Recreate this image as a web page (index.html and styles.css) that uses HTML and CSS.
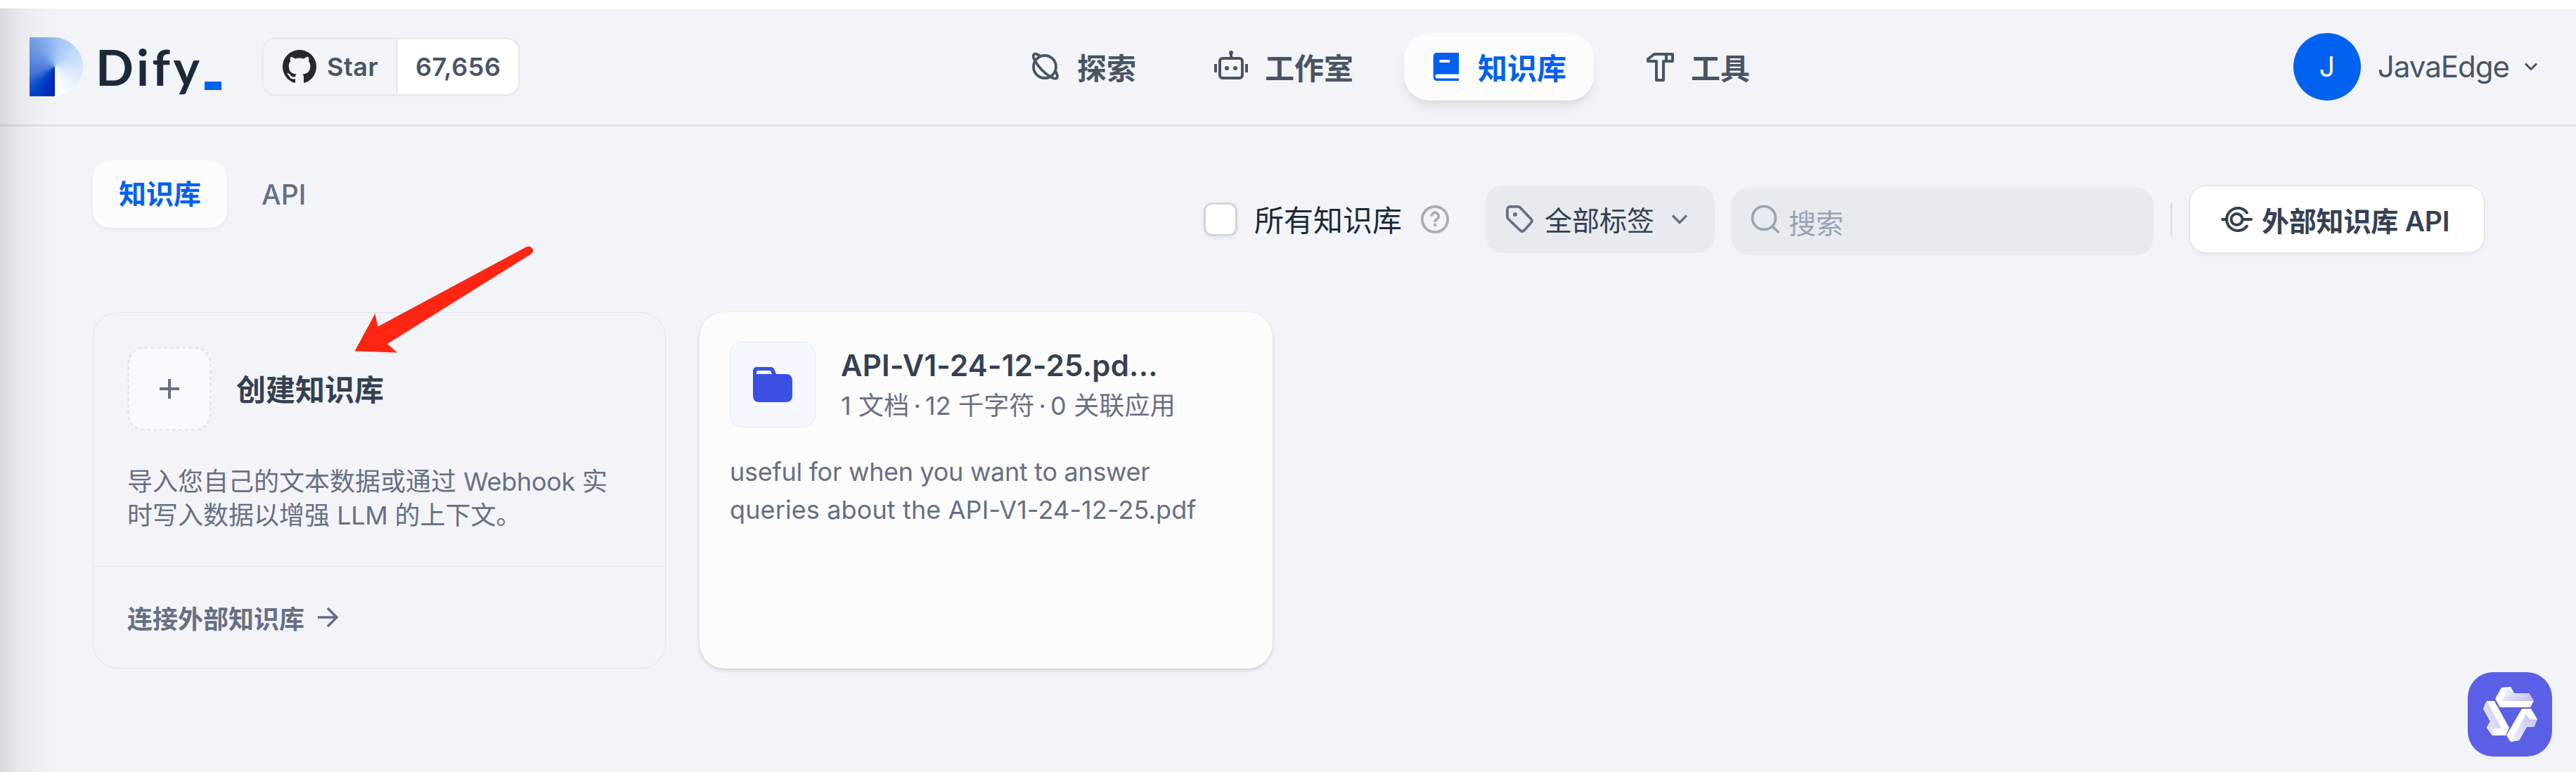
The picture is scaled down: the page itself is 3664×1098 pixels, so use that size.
FILE: index.html
```
<!DOCTYPE html>
<html lang="zh">
<head>
    <meta charset="utf-8">
    <title>知识库 - Dify</title>
    <link rel="stylesheet" href="styles.css">
</head>
<body>
    <header class="header">
        <div class="header-left">
            <div class="logo">
                <div class="logo-mark"></div>
                <span class="logo-text">Dify</span>
                <span class="logo-dash"></span>
            </div>
            <div class="github">
                <div class="github-star">
                    <svg width="48" height="48" viewBox="0 0 16 16" fill="#24292f"><path d="M8 0C3.58 0 0 3.58 0 8c0 3.54 2.29 6.53 5.47 7.59.4.07.55-.17.55-.38 0-.19-.01-.82-.01-1.49-2.01.37-2.53-.49-2.69-.94-.09-.23-.48-.94-.82-1.13-.28-.15-.68-.52-.01-.53.63-.01 1.08.58 1.23.82.72 1.21 1.87.87 2.33.66.07-.52.28-.87.51-1.07-1.78-.2-3.64-.89-3.64-3.95 0-.87.31-1.59.82-2.15-.08-.2-.36-1.02.08-2.12 0 0 .67-.21 2.2.82.64-.18 1.32-.27 2-.27s1.36.09 2 .27c1.53-1.04 2.2-.82 2.2-.82.44 1.1.16 1.92.08 2.12.51.56.82 1.27.82 2.15 0 3.07-1.87 3.75-3.65 3.95.29.25.54.73.54 1.48 0 1.07-.01 1.93-.01 2.2 0 .21.15.46.55.38A8 8 0 0 0 16 8c0-4.42-3.58-8-8-8z"/></svg>
                    <span>Star</span>
                </div>
                <div class="github-count">67,656</div>
            </div>
        </div>
        <nav class="nav">
            <a class="nav-item">
                <svg width="42" height="42" viewBox="0 0 42 42" fill="none" stroke="currentColor" stroke-width="3.800"><circle cx="20" cy="21" r="16"/><path d="M14 6C9 2 5 2 4 4 2.500 8 8 17 15 24.500 22 32 32 39 36.500 37.500c2.500-1.500 1.500-6-1.500-10.500"/></svg>
                <span>探索</span>
            </a>
            <a class="nav-item">
                <svg width="48" height="48" viewBox="0 0 48 48" fill="none" stroke="currentColor" stroke-width="4"><rect x="8" y="12" width="32" height="28" rx="4"/><path d="M24 11V5M2 20v12M46 20v12"/><g fill="currentColor" stroke="none"><circle cx="24" cy="4" r="3"/><circle cx="18" cy="26" r="3"/><circle cx="30" cy="26" r="3"/></g></svg>
                <span>工作室</span>
            </a>
            <a class="nav-item nav-active">
                <svg width="42" height="42" viewBox="0 0 14 14" fill="currentColor" fill-rule="evenodd"><path d="M2.500.3H13v10.200H2.800a.7.7 0 0 0 0 2H13v1.200H2.700A1.800 1.800 0 0 1 .9 12V2A1.700 1.700 0 0 1 2.500.3zM3.800 3.700v1.300h4.900V3.700z"/></svg>
                <span>知识库</span>
            </a>
            <a class="nav-item">
                <svg width="42" height="42" viewBox="0 0 42 42" fill="none" stroke="currentColor" stroke-width="4" stroke-linejoin="round"><path d="M14 3h26v10H27v27H17V13H5v-3zM31 3v10"/></svg>
                <span>工具</span>
            </a>
        </nav>
        <div class="account">
            <div class="avatar">J</div>
            <span class="account-name">JavaEdge</span>
            <svg width="20" height="12" viewBox="0 0 20 12" fill="none" stroke="currentColor" stroke-width="3"><path d="M2 1.500l8 8 8-8"/></svg>
        </div>
    </header>

    <div class="toolbar">
        <div class="tabs">
            <div class="tab tab-active">知识库</div>
            <div class="tab">API</div>
        </div>
        <div class="filters">
            <label class="all-datasets">
                <span class="checkbox"></span>
                <span class="all-label">所有知识库</span>
                <svg width="42" height="42" viewBox="0 0 42 42" fill="none" stroke="#a9aeb5" stroke-width="3.800"><circle cx="21" cy="21" r="18.200"/><path d="M16.200 16.500a5 5 0 1 1 7.300 4.300c-2 1.200-2.500 2-2.500 4.200M21 27v4"/></svg>
            </label>
            <div class="tag-filter">
                <svg width="42" height="42" viewBox="0 0 42 42" fill="none" stroke="#676f83" stroke-width="3.800"><path d="M7 2.800h10.500c1.500 0 2.500.4 3.500 1.400l15.500 16c2 2 2 4 0 6L27 36.500c-2 2-4 2-6 0L4.400 20.500C3.400 19.500 3 18.500 3 17V6.800a4 4 0 0 1 4-4z"/><circle cx="14" cy="14" r="3" fill="#676f83" stroke="none"/></svg>
                <span class="tag-label">全部标签</span>
                <svg width="24" height="16" viewBox="0 0 24 16" fill="none" stroke="#676f83" stroke-width="3.400"><path d="M2 2.500l10 10 10-10"/></svg>
            </div>
            <div class="search">
                <svg width="42" height="42" viewBox="0 0 42 42" fill="none" stroke="#98a2b2" stroke-width="3.600"><circle cx="19" cy="19" r="16.500"/><path d="M31 31l9 9"/></svg>
                <span>搜索</span>
            </div>
            <div class="divider"></div>
            <button class="external-btn">
                <svg width="45" height="42" viewBox="0 0 45 42" fill="none" stroke="currentColor" stroke-width="4" stroke-linecap="round"><path d="M37 11.500A16 16 0 1 0 37 30.500"/><circle cx="22.500" cy="21" r="8"/><path d="M31 21h12M2 21h4"/></svg>
                <span>外部知识库 API</span>
            </button>
        </div>
    </div>

    <main class="cards">
        <div class="card card-create">
            <div class="create-body">
                <div class="card-head">
                    <div class="plus-box">
                        <svg width="28" height="28" viewBox="0 0 28 28" stroke="#676f83" stroke-width="4"><path d="M14 0v28M0 14h28"/></svg>
                    </div>
                    <div class="create-title">创建知识库</div>
                </div>
                <div class="create-desc">导入您自己的文本数据或通过 <span class="latin">Webhook</span> 实<br>时写入数据以增强 <span class="latin">LLM</span> 的上下文。</div>
            </div>
            <div class="connect">
                <span>连接外部知识库</span>
                <svg width="30" height="30" viewBox="0 0 30 30" fill="none" stroke="currentColor" stroke-width="3.600"><path d="M1 15h26M15 2l13 13-13 13"/></svg>
            </div>
        </div>
        <div class="card card-dataset">
            <div class="card-head">
                <div class="folder-box">
                    <svg width="56" height="50" viewBox="0 0 56 50" fill="#3b50e3" fill-rule="evenodd"><path d="M6 0h19c3 0 4.500 1.500 5.500 4l2.500 6h13c7 0 10 3 10 10v20c0 7-3 10-10 10H10C3 50 0 47 0 40V6c0-4 2-6 6-6zM5 10h22l-1.300-3.500C25.300 5.300 24.500 5 23.500 5H8C6 5 5 6 5 8z"/></svg>
                </div>
                <div>
                    <div class="dataset-title">API-V1-24-12-25.pd...</div>
                    <div class="dataset-meta">1 文档<i>·</i>12 千字符<i>·</i>0 关联应用</div>
                </div>
            </div>
            <div class="dataset-desc"><span class="tight">useful for when you want to answer</span><br>queries about the API-V1-24-12-25.pdf</div>
        </div>
    </main>

    <svg class="pointer-arrow" width="260" height="156" viewBox="0 0 260 156" fill="#ff2513"><path d="M4.500 151.500L33.500 98l4 18.500L248 3.500c4-2 7-1 9 1.500 2 3 1.500 6-2 8.500L51 141l14 12.500z"/></svg>

    <div class="assistant">
        <svg width="120" height="120" viewBox="0 0 120 120">
            <defs>
                <linearGradient id="face" x1="0" y1="0" x2="1" y2="1">
                    <stop offset="0" stop-color="#fff"/>
                    <stop offset="1" stop-color="#bcb9f0"/>
                </linearGradient>
                <linearGradient id="face2" x1="0" y1="1" x2="1" y2="0">
                    <stop offset="0" stop-color="#f4f3fd"/>
                    <stop offset="1" stop-color="#c0bdf2"/>
                </linearGradient>
            </defs>
            <path fill="#fff" d="M48 22l13-1 5 9h21l7 11-5 9H46l-7-12z"/>
            <path fill="url(#face)" d="M48 22l13-1 5 9h21l7 11H49l5-9z"/>
            <path fill="#fff" d="M27 41h11l21 38-5 11H35l-8-11 5-9L22 52z"/>
            <path fill="url(#face2)" d="M22 52l5-11 21 39H38l-3 10-8-11 5-9z"/>
            <path fill="#fff" d="M77 52h13l9 15-5 11H84L73 97l-12 2-6-9z"/>
            <path fill="url(#face2)" d="M83 60l5 7h11l-5 11H84L73 97l-12 2z"/>
        </svg>
    </div>
    <div class="edge-shadow"></div>
</body>
</html>
```

FILE: styles.css
```
* {
    box-sizing: border-box;
}
body {
    margin: 0;
    height: 1098px;
    position: relative;
    overflow: hidden;
    background: #f2f4f8;
    border-top: 12px solid #fff;
    font-family: Inter, "Noto Sans CJK SC", sans-serif;
    color: #354052;
}
svg {
    display: block;
    flex-shrink: 0;
}

/* header */
.header {
    display: grid;
    grid-template-columns: 1385px auto 1fr;
    align-items: center;
    height: 168px;
    padding: 0 54px 0 42px;
    border-bottom: 3px solid #e0e2e6;
}
.header-left {
    display: flex;
    align-items: center;
}
.logo {
    display: flex;
    align-items: center;
    width: 330px;
    height: 84px;
}
.logo-mark {
    width: 76px;
    height: 84px;
    border-radius: 0 42px 42px 0;
    background: conic-gradient(from 180deg at 36px 42px, #0022b8 0deg, #0045cc 40deg, #4a78dc 75deg, #6f9ae8 130deg, #a3c6f6 190deg, #c2dcfb 240deg, #dbe7fd 280deg, #fff 350deg, #fff 360deg);
}
.logo-text {
    width: 155px;
    margin-left: 18px;
    font-family: Lato, sans-serif;
    font-size: 71px;
    font-weight: 700;
    line-height: 84px;
    letter-spacing: 4.5px;
    color: #1d2939;
}
.logo-dash {
    width: 24px;
    height: 12px;
    margin-top: 54px;
    background: #0062ee;
}
.github {
    display: flex;
    width: 368px;
    height: 84px;
    border: 3px solid #e9ebf0;
    border-radius: 20px;
    overflow: hidden;
    font-size: 36px;
    font-weight: 600;
    letter-spacing: .5px;
    color: #495464;
}
.github-star {
    display: flex;
    align-items: center;
    gap: 15px;
    width: 191px;
    padding-left: 27px;
    border-right: 3px solid #e9ebf0;
}
.github-count {
    flex: 1;
    padding-left: 25px;
    line-height: 79px;
    background: #fff;
}
.nav {
    display: flex;
    align-items: center;
    gap: 33px;
    font-size: 42px;
    font-weight: 600;
    color: #495464;
}
.nav-item {
    display: flex;
    align-items: center;
    gap: 24px;
    height: 96px;
    padding: 0 39px;
}
.nav-active {
    border-radius: 36px;
    background: #fcfcfd;
    color: #0060f0;
    box-shadow: 0 12px 18px -3px rgba(16, 24, 40, .08), 0 6px 9px -3px rgba(16, 24, 40, .05);
}
.account {
    display: flex;
    align-items: center;
    justify-content: flex-end;
    color: #495464;
}
.avatar {
    width: 96px;
    height: 96px;
    border-radius: 50%;
    background: #0062ee;
    color: #fff;
    font-size: 39px;
    line-height: 96px;
    text-align: center;
}
.account-name {
    margin: 0 21px 0 24px;
    font-size: 42px;
    letter-spacing: -1px;
}

/* toolbar */
.toolbar {
    display: flex;
    justify-content: space-between;
    padding: 48px 130px 0 132px;
}
.tabs {
    display: flex;
    font-size: 39px;
    font-weight: 500;
    color: #676f83;
}
.tab {
    height: 96px;
    padding: 0 37px;
    line-height: 98px;
}
.tab-active {
    width: 191px;
    margin-right: 12px;
    border-radius: 24px;
    background: #fcfcfd;
    color: #0060f0;
    font-weight: 600;
    line-height: 96px;
    box-shadow: 0 3px 6px rgba(16, 24, 40, .05);
}
.filters {
    display: flex;
    align-items: center;
    height: 132px;
    padding-top: 36px;
}
.all-datasets {
    display: flex;
    align-items: center;
    margin-right: 51px;
    font-size: 42px;
    color: #1d2939;
}
.checkbox {
    width: 48px;
    height: 48px;
    border: 3px solid #d0d5dc;
    border-radius: 12px;
    background: #fff;
    box-shadow: 0 3px 6px rgba(16, 24, 40, .05);
}
.all-label {
    margin: 0 26px 0 24px;
    padding-bottom: 3px;
}
.tag-filter {
    display: flex;
    align-items: center;
    width: 326px;
    height: 96px;
    margin-right: 24px;
    padding-left: 28px;
    border-radius: 24px;
    background: #e7eaef;
    font-size: 39px;
}
.tag-label {
    margin: 0 24px 0 14px;
    padding-bottom: 2px;
}
.search {
    display: flex;
    align-items: center;
    gap: 12px;
    width: 600px;
    height: 96px;
    margin-top: 6px;
    padding: 0 0 6px 27px;
    border-radius: 24px;
    background: #e7eaef;
    font-size: 39px;
    color: #98a2b2;
}
.search span {
    padding-top: 5px;
}
.divider {
    width: 3px;
    height: 48px;
    margin: 0 24px;
    background: #dee1e6;
}
.external-btn {
    display: flex;
    align-items: center;
    gap: 13px;
    width: 420px;
    height: 96px;
    padding: 0 0 0 44px;
    border: 1px solid #dcdfe3;
    border-radius: 24px;
    background: #fff;
    box-shadow: 0 3px 6px rgba(16, 24, 40, .05);
    font-family: inherit;
    font-size: 39px;
    font-weight: 600;
    letter-spacing: -.2px;
    color: #354052;
    white-space: nowrap;
}

/* cards */
.cards {
    display: flex;
    gap: 48px;
    padding: 84px 132px 0;
}
.card {
    width: 815px;
    height: 507px;
    border-radius: 36px;
}
.card-head {
    display: flex;
    align-items: center;
}
.card-create {
    display: flex;
    flex-direction: column;
    border: 1px solid #e1e3e7;
}
.create-body {
    flex: 1;
    padding: 48px 48px 0;
}
.plus-box {
    display: flex;
    align-items: center;
    justify-content: center;
    width: 120px;
    height: 120px;
    border: 3px dashed #e6e8ec;
    border-radius: 24px;
    background: #f9fafb;
}
.create-title {
    margin-left: 35px;
    padding-bottom: 3px;
    font-size: 42px;
    font-weight: 600;
}
.create-desc {
    margin-top: 48px;
    font-size: 36px;
    line-height: 48px;
    color: #676f83;
    white-space: nowrap;
}
.latin {
    letter-spacing: -.3px;
}
.connect {
    display: flex;
    align-items: center;
    gap: 18px;
    height: 145px;
    padding-left: 48px;
    border-top: 1px solid #e4e6ea;
    font-size: 36px;
    font-weight: 600;
    color: #676f83;
}
.card-dataset {
    padding: 42px 43px;
    background: #fcfcfd;
    box-shadow: 0 3px 6px rgba(16, 24, 40, .12), 0 1px 3px rgba(16, 24, 40, .06);
}
.folder-box {
    display: flex;
    align-items: center;
    justify-content: center;
    width: 122px;
    height: 122px;
    border: 1px solid #e0eaff;
    border-radius: 18px;
    background: #f5f8ff;
}
.card-dataset .card-head {
    gap: 36px;
}
.dataset-title {
    font-size: 42px;
    font-weight: 600;
    line-height: 60px;
    letter-spacing: .2px;
    white-space: nowrap;
}
.dataset-meta {
    font-size: 36px;
    line-height: 54px;
    letter-spacing: .15px;
    color: #676f83;
    white-space: nowrap;
}
.dataset-meta i {
    margin: 0 6px;
    font-style: normal;
}
.dataset-desc {
    margin-top: 36px;
    font-size: 36px;
    line-height: 54px;
    letter-spacing: .12px;
    color: #676f83;
    white-space: nowrap;
}
.tight {
    letter-spacing: -.3px;
}

/* things floating over the page */
.pointer-arrow {
    position: absolute;
    left: 500px;
    top: 336px;
}
.assistant {
    position: absolute;
    left: 3510px;
    top: 944px;
    width: 120px;
    height: 120px;
    border-radius: 36px;
    background: #5b60e6;
}
.edge-shadow {
    position: absolute;
    left: 0;
    top: -12px;
    width: 84px;
    height: 1098px;
    background: linear-gradient(90deg, rgba(0, 0, 0, .11), rgba(0, 0, 0, .06) 25%, rgba(0, 0, 0, .02) 60%, transparent);
}
```
